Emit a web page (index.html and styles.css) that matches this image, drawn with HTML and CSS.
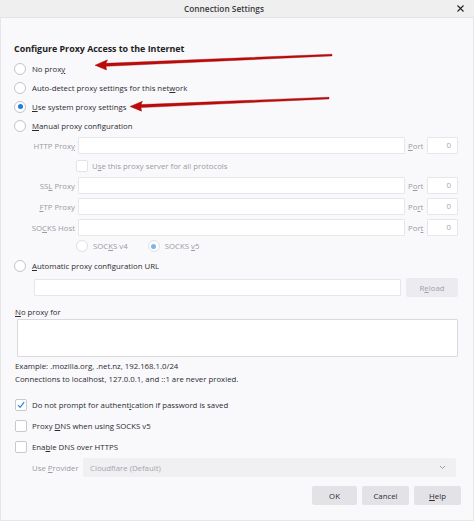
FILE: index.html
```html
<!DOCTYPE html>
<html>
<head>
<meta charset="utf-8">
<link rel="stylesheet" href="styles.css">
</head>
<body>
<div class="window">
  <div class="titlebar">
    <span class="title">Connection Settings</span>
    <span class="close"><svg width="7" height="7" viewBox="0 0 7 7"><path d="M0.5 0.5L6.5 6.5M6.5 0.5L0.5 6.5" stroke="#222" stroke-width="1.1"/></svg></span>
  </div>
  <div class="content">
    <div class="heading">Configure Proxy Access to the Internet</div>
    <div class="radio-row first"><span class="radio"></span><span>No prox<u>y</u></span></div>
    <div class="radio-row"><span class="radio"></span><span>Auto-detect proxy settings for this net<u>w</u>ork</span></div>
    <div class="radio-row"><span class="radio checked"></span><span><u>U</u>se system proxy settings</span></div>
    <div class="radio-row"><span class="radio"></span><span><u>M</u>anual proxy configuration</span></div>

    <div class="proxy-grid">
      <span class="plabel">HTTP Prox<u>y</u></span><span class="input"></span><span class="port-label"><u>P</u>ort</span><span class="input port">0</span>
      <span></span><span class="all-row"><span class="checkbox"></span><span>U<u>s</u>e this proxy server for all protocols</span></span>
      <span class="plabel">SS<u>L</u> Proxy</span><span class="input"></span><span class="port-label">P<u>o</u>rt</span><span class="input port">0</span>
      <span class="plabel"><u>F</u>TP Proxy</span><span class="input"></span><span class="port-label">Po<u>r</u>t</span><span class="input port">0</span>
      <span class="plabel">SO<u>C</u>KS Host</span><span class="input"></span><span class="port-label">Por<u>t</u></span><span class="input port">0</span>
      <span></span><span class="socks-row"><span class="radio dis"></span><span class="v4">SOC<u>K</u>S v4</span><span class="radio dis checked"></span><span>SOCKS <u>v</u>5</span></span>
    </div>

    <div class="radio-row auto"><span class="radio"></span><span><u>A</u>utomatic proxy configuration URL</span></div>
    <div class="url-row"><span class="input url"></span><span class="btn reload">R<u>e</u>load</span></div>

    <div class="noproxy-label"><u>N</u>o proxy for</div>
    <div class="textarea"></div>
    <div class="note first-note">Example: .mozilla.org, .net.nz, 192.168.1.0/24</div>
    <div class="note">Connections to localhost, 127.0.0.1, and ::1 are never proxied.</div>

    <div class="check-row first-check"><span class="checkbox checked"><svg width="10" height="10" viewBox="0 0 10 10"><path d="M2 5.2L4.1 7.4L8.2 2.2" fill="none" stroke="#2f7fe0" stroke-width="1.2"/></svg></span><span>Do not prompt for authent<u>i</u>cation if password is saved</span></div>
    <div class="check-row"><span class="checkbox"></span><span>Proxy <u>D</u>NS when using SOCKS v5</span></div>
    <div class="check-row"><span class="checkbox"></span><span>Ena<u>b</u>le DNS over HTTPS</span></div>

    <div class="provider-row"><span class="provider-label">Use <u>P</u>rovider</span><span class="select"><span>Cloudflare (Default)</span><svg width="7" height="5" viewBox="0 0 7 5"><path d="M1 1L3.5 3.5L6 1" fill="none" stroke="#9a9aa4" stroke-width="1"/></svg></span></div>

    <div class="button-row"><span class="btn">OK</span><span class="btn">Cancel</span><span class="btn"><u>H</u>elp</span></div>
  </div>

  <svg class="arrows" width="474" height="521" viewBox="0 0 474 521">
    <polygon points="332,54.2 106,63.3 107.5,59.8 95,65.2 106.5,70 106,66.3 332,55.9" fill="#bf0a0a" stroke="#9a0000" stroke-width="0.4"/>
    <polygon points="329,97.2 141,104.6 142.5,101.2 130,106.5 141.5,111.2 141,107.6 329,98.9" fill="#bf0a0a" stroke="#9a0000" stroke-width="0.4"/>
  </svg>
</div>
</body>
</html>
```
FILE: styles.css
```css
* { box-sizing: border-box; }
html, body { margin: 0; padding: 0; }
body {
  width: 474px;
  height: 521px;
  overflow: hidden;
  background: #f9f9fb;
  font-family: "Open Sans", "Noto Sans", sans-serif;
  font-size: 7.8px;
  color: #2b2a33;
}
u { text-decoration-thickness: 0.6px; text-underline-offset: 1px; }
.window {
  position: relative;
  width: 474px;
  height: 521px;
  background: #f9f9fb;
  box-shadow: inset 1px 0 #e6e6ea, inset -1px 0 #e6e6ea, inset 0 -1px #e6e6ea;
}
.titlebar {
  height: 18px;
  background: #efeff0;
  border-bottom: 1px solid #e3e3e5;
  display: flex;
  align-items: center;
  padding-bottom: 1px;
}
.title {
  flex: 1;
  text-align: center;
  font-size: 8.3px;
  font-weight: 600;
  color: #3a3a3a;
}
.close {
  width: 26px;
  display: flex;
  justify-content: center;
  padding-right: 2px;
}
.content {
  display: flex;
  flex-direction: column;
  padding: 0 16px 0 14px;
}
.heading {
  margin-top: 25px;
  height: 12px;
  line-height: 12px;
  font-size: 8.9px;
  font-weight: 700;
  color: #222;
}
.radio-row {
  height: 19px;
  display: flex;
  align-items: center;
  gap: 6px;
}
.radio-row.first { margin-top: 4px; }
.radio {
  flex: none;
  width: 12px;
  height: 12px;
  border-radius: 50%;
  border: 1px solid #c3c3ca;
  background: #fff;
  display: flex;
  align-items: center;
  justify-content: center;
}
.radio.checked::after {
  content: "";
  width: 5px;
  height: 5px;
  border-radius: 50%;
  background: #1a7fdb;
}
.radio.dis { border-color: #e0e0e5; }
.radio.dis.checked::after { background: #7fb5e6; }
.proxy-grid {
  margin-top: 2px;
  display: grid;
  grid-template-columns: 61px 327px 16px 31px;
  column-gap: 3px;
  row-gap: 4px;
  align-items: center;
  color: #9a9aa4;
}
.plabel { text-align: right; white-space: nowrap; }
.port-label { white-space: nowrap; }
.input {
  height: 17px;
  background: #fff;
  border: 1px solid #e6e6eb;
  border-radius: 1px;
}
.input.port {
  text-align: right;
  padding-right: 6px;
  line-height: 15px;
  color: #a5a5ae;
}
.all-row {
  grid-column: 2 / 5;
  height: 15px;
  margin-left: -2px;
  display: flex;
  align-items: center;
  gap: 4px;
}
.socks-row {
  grid-column: 2 / 5;
  height: 12px;
  margin-left: -2px;
  display: flex;
  align-items: center;
  gap: 5px;
}
.socks-row .v4 { margin-right: 15px; }
.checkbox {
  flex: none;
  width: 12px;
  height: 12px;
  border: 1px solid #c8c8cf;
  border-radius: 2px;
  background: #fff;
  display: flex;
  align-items: center;
  justify-content: center;
}
.all-row .checkbox { border-color: #e3e3e8; }
.radio-row.auto { margin-top: 4px; }
.url-row {
  margin-top: 3px;
  margin-left: 20px;
  height: 19px;
  display: flex;
  align-items: center;
  gap: 5px;
}
.input.url { width: 367px; }
.btn {
  display: flex;
  align-items: center;
  justify-content: center;
  height: 19px;
  width: 47px;
  background: #e3e3e7;
  border-radius: 2px;
  color: #2b2a33;
}
.btn.reload {
  width: 52px;
  background: #ececf0;
  color: #a0a0a9;
}
.noproxy-label {
  margin-top: 9px;
  margin-left: 1px;
  height: 12px;
  line-height: 12px;
}
.textarea {
  margin-top: 1px;
  margin-left: 3px;
  width: 441px;
  height: 38px;
  background: #fff;
  border: 1px solid #d9d9df;
  border-radius: 1px;
}
.note {
  height: 13px;
  line-height: 13px;
  margin-left: 1px;
}
.note.first-note { margin-top: 3px; }
.check-row {
  height: 21px;
  display: flex;
  align-items: center;
  gap: 5px;
  margin-left: 1px;
}
.check-row.first-check { margin-top: 8px; }
.provider-row {
  margin-top: 1px;
  margin-left: 18px;
  height: 19px;
  display: flex;
  align-items: center;
  gap: 6px;
  color: #9a9aa4;
}
.provider-label { width: 45px; white-space: nowrap; }
.select {
  width: 373px;
  height: 19px;
  background: #f0f0f3;
  border-radius: 2px;
  display: flex;
  align-items: center;
  justify-content: space-between;
  padding: 0 10px 0 7px;
  color: #a5a5ae;
}
.button-row {
  margin-top: 9px;
  margin-right: -3px;
  display: flex;
  justify-content: flex-end;
  gap: 5px;
}
.button-row .btn:first-child { width: 45px; }
.arrows {
  position: absolute;
  top: 0;
  left: 0;
  pointer-events: none;
}
```
